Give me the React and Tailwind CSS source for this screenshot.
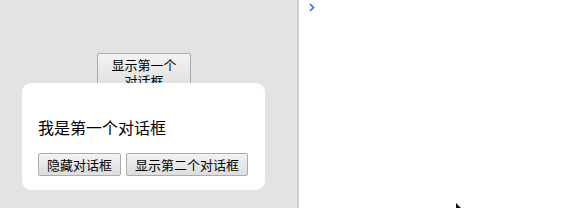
import React from 'react';

const font = { fontFamily: '"Microsoft YaHei", "Noto Sans CJK SC", "Liberation Sans", sans-serif' };

const Btn = ({ children, className = '' }) => (
  <button
    className={`border border-[#acacac] rounded-[2px] bg-gradient-to-b from-[#f3f3f3] to-[#dddddd] text-[13px] leading-[16px] text-black ${className}`}
  >
    {children}
  </button>
);

export default function App() {
  return (
    <div className="w-[565px] h-[208px] flex overflow-hidden bg-white" style={font}>
      {/* Preview pane */}
      <div className="relative w-[299px] h-full bg-[#e3e3e3] border-r-2 border-[#d2d2d2] shrink-0">
        <div className="pt-[53px] pl-[97px]">
          <Btn className="w-[94px] h-[40px] px-[12px] py-[3px]">显示第一个对话框</Btn>
        </div>

        {/* Dialog */}
        <div className="absolute left-[22px] top-[83px] w-[243px] h-[107px] bg-white rounded-[9px] px-[16px] pt-[34px]">
          <p className="text-[16px] leading-[20px] text-black">我是第一个对话框</p>
          <div className="flex gap-[5px] mt-[16px]">
            <Btn className="h-[23px] px-[8px]">隐藏对话框</Btn>
            <Btn className="h-[23px] px-[8px]">显示第二个对话框</Btn>
          </div>
        </div>
      </div>

      {/* Console pane */}
      <div className="relative flex-1 h-full">
        <svg className="absolute left-[10px] top-[3px]" width="6" height="9" viewBox="0 0 6 9">
          <path d="M1 1 L4.5 4.5 L1 8" stroke="#2f74d0" strokeWidth="1.6" fill="none" />
        </svg>
        <svg className="absolute left-[157px] top-[203px]" width="6" height="8" viewBox="0 0 6 8">
          <path d="M0 0 L0 7 L2 5 L5 5 Z" fill="#111" />
        </svg>
      </div>
    </div>
  );
}
